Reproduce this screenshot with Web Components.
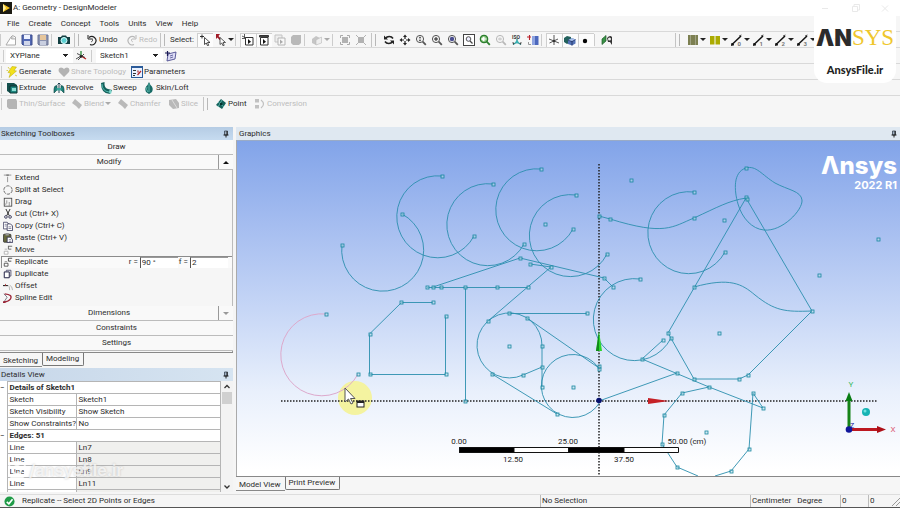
<!DOCTYPE html>
<html lang="en">
<head>
<meta charset="utf-8">
<title>A: Geometry - DesignModeler</title>
<style>
html,body{margin:0;height:100%}
body{font:8px/12px Roboto,"Noto Sans",sans-serif;color:#2c2c2c;background:#f5f5f5;overflow:hidden}
</style>
</head>
<body>
<app-window></app-window>
<script>
const define=(name,html,setup)=>customElements.define(name,class extends HTMLElement{
  constructor(){super();this.attachShadow({mode:'open'})}
  connectedCallback(){
    this.shadowRoot.innerHTML='<style>*{box-sizing:border-box}button,input,select{font:inherit;color:inherit;border:0;padding:0;margin:0;background:none;border-radius:0}</style>'+(typeof html==='function'?html(this):html);
    if(setup)setup(this);
  }
});

/* 12 x 12 icon drawings */
const lens=(c,inner)=>`<circle cx="5" cy="5" r="3.6" fill="#f4f4f4" stroke="${c}"/><path d="M7.7 7.7 10.8 10.8" stroke="${c}" stroke-width="1.800"/>${inner}`;
const edge=n=>`<path d="M1 10.500 10 2" stroke="#111" stroke-width="1.500"/><path d="M0 11.500 3 11 1 9ZM8 2 10.500 1" stroke="#111" fill="#111" stroke-width=".7"/>${n===''?'':`<text x="6.500" y="12" font-size="6" font-weight="700" fill="#777" font-family="Roboto">${n}</text>`}`;
const I={
app:`<rect width="12" height="12" fill="#1b1a12"/><path d="M3 2 10 6 3 10Z" fill="#f4c21c"/><path d="M3 2 6 6 3 10Z" fill="#fff0a0"/>`,
newf:`<path d="M1 11 6 3 7.500 1.500 10.500 3V11Z" fill="#fff" stroke="#aaa"/><path d="M7 2 6.500 5 10.500 5" fill="#ddd" stroke="#999" stroke-width=".7"/>`,
save:`<path d="M1 1H11V11H2L1 10Z" fill="#5369b4" stroke="#3e4f8d"/><rect x="3" y="1" width="6" height="4" fill="#eef2ff"/><rect x="3" y="7" width="6" height="4" fill="#d0d6ea"/>`,
saveas:`<path d="M1 1H11V11H2L1 10Z" fill="#8b93b0" stroke="#6a7496"/><rect x="3" y="1" width="6" height="5" fill="#e5c59b"/><rect x="3" y="7" width="6" height="4" fill="#c9cfe0"/>`,
camera:`<path d="M0 3H3L4 1.500H8L9 3H12V10H0Z" fill="#123f42"/><circle cx="6" cy="6.500" r="3" fill="#5ed1d2" stroke="#dff"/>`,
undo:`<path d="M3 3.500A4.200 4.200 0 1 1 4 10.500" fill="none" stroke="#222" stroke-width="1.200"/><path d="M2 1V5H6" fill="none" stroke="#222"/><path d="M6.500 4.500V7L5 8" fill="none" stroke="#444" stroke-width=".8"/>`,
redo:`<path d="M9 3.500A4.200 4.200 0 1 0 8 10.500" fill="none" stroke="#b8b8b8" stroke-width="1.200"/><path d="M10 1V5H6" fill="none" stroke="#b8b8b8"/><path d="M5.500 5V7L7 8" fill="none" stroke="#bbb" stroke-width=".8"/>`,
selnew:`<path d="M1 2.500H5M3 .5V4.500" stroke="#333"/><path d="M5.500 3.500V10.500L7.300 9 8.500 11.800 9.700 11.300 8.500 8.500H11Z" fill="#fff" stroke="#222" stroke-width=".8"/>`,
selmode:`<path d="M1 0H5L3.500 2 6 5 4.500 6 2.500 3.500 1 5Z" fill="#a11a26"/><path d="M5 3.500V10.500L6.800 9 8 11.800 9.200 11.300 8 8.500H10.500Z" fill="#fff" stroke="#333" stroke-width=".8"/>`,
fpoint:`<path d="M3.500 3.500H11V11H3.500Z" fill="#fff" stroke="#333"/><path d="M0 2 4 4M2.500 0V4M0 4.500H4" stroke="#333" stroke-width=".8"/><path d="M6 5V10L9 7.800Z" fill="#111"/>`,
fedge:`<path d="M1.500 1.500H10.500V3H1.500Z" fill="#555" stroke="#333"/><path d="M2.500 3.500H10V11H2.500Z" fill="#fff" stroke="#333"/><path d="M5 5V10L8 7.800Z" fill="#111"/>`,
fface:`<path d="M1 1H8V8H1Z" fill="#eee" stroke="#c4c4c4"/><path d="M4 4H11V11H4Z" fill="#f8f8f8" stroke="#b4b4b4"/><path d="M6 5.500V10L9 8Z" fill="#aaa"/>`,
fbody:`<path d="M1 3 3 1H11V9L9 11H3L1 9Z" fill="#b9b9b9"/>`,
extend:`<path d="M1 5 5 2 9 4V9L5 11 1 9Z" fill="#c5c5c5"/><path d="M5 6 10.500 3V9L5 11Z" fill="#eee" stroke="#bbb" stroke-width=".6"/>`,
box1:`<rect x="3" y="3" width="6" height="6" fill="#b2b2b2"/><path d="M1.500 4V1.500H4M8 1.500H10.500V4M10.500 8V10.500H8M4 10.500H1.500V8" fill="none" stroke="#aaa"/>`,
box2:`<rect x="3" y="3" width="6" height="6" fill="#b2b2b2"/><path d="M1 1 4 4M11 1 8 4M1 11 4 8M11 11 8 8" stroke="#b2b2b2"/>`,
rotate:`<path d="M10 4.500A4.200 3.500 0 0 0 2.500 4.500M2 7.500A4.200 3.500 0 0 0 9.500 7.500" fill="none" stroke="#222" stroke-width="1.500"/><path d="M1 1.500V5.500H5ZM11 10.500V6.500H7Z" fill="#222"/>`,
pan:`<path d="M6 .5 8 3H4ZM6 11.500 4 9H8ZM.5 6 3 4V8ZM11.500 6 9 8V4Z" fill="#222"/><path d="M6 3V5M6 7V9M3 6H5M7 6H9" stroke="#222" stroke-width="1.200"/>`,
zoom:lens('#555','<path d="M5 2.500 6.200 4.300H3.800ZM5 7.500 3.800 5.700H6.200Z" fill="#222"/>'),
zoomin:lens('#555','<path d="M3 5H7M5 3V7" stroke="#222"/>'),
zoomfit:lens('#555','<circle cx="5" cy="5" r="2.200" fill="#4b4f91"/>'),
zoombox:`<rect x=".5" y=".5" width="11" height="11" fill="#fff" stroke="#444"/><circle cx="5.500" cy="5" r="2.300" fill="#eef" stroke="#444" stroke-width=".9"/><path d="M7 7 9.500 9.500" stroke="#444" stroke-width="1.300"/>`,
prev:lens('#2c7f2e','<circle cx="5" cy="5" r="3.600" fill="#8dc783" stroke="#2c7f2e" stroke-width="1.400"/><path d="M2.500 5 5 3V7ZM4 5H7.500" fill="#fff" stroke="#fff"/>'),
next:lens('#b8b8b8','<path d="M3 5H7M5 3.500V6.500" stroke="#c4c4c4"/>'),
iso:`<text x="1" y="4.500" font-size="5" font-weight="700" font-family="Roboto" fill="#333">ISO</text><path d="M6 5V8M6 8 2 10.500M6 8 10 10.500" stroke="#278f91" stroke-width="1.300"/><circle cx="6" cy="8" r="1.500" fill="#37b4b5"/><path d="M1 8.500H3V11ZM11 8.500H9V11Z" fill="#444"/>`,
look:`<rect x="5" y="2" width="6.500" height="9" fill="#4c68bd"/><path d="M5 2H8V11H5Z" fill="#8fa4e0"/><path d="M0 3H4M2.500 1V6" stroke="#b9202a" stroke-width="1.100"/><path d="M1.500 8V10.500H4" fill="none" stroke="#999"/>`,
plane:`<path d="M6 1V11M1 5 11 9M1.500 9 10 5" stroke="#444" stroke-width=".9"/><circle cx="6" cy="7" r="1.200" fill="#333"/>`,
model:`<path d="M0 4 3 2 7 3V8L3 10 0 8Z" fill="#22605c"/><path d="M4 6 8 4 11.500 5.500V9.500L8 11.500 4 10Z" fill="#5372b6"/><path d="M4 6 8 7.500V11.500M8 7.500 11.500 5.500" stroke="#1e2d5c" fill="none" stroke-width=".8"/><path d="M8 4 11 5.500 8 7 4.500 6Z" fill="#a8c0ea"/>`,
dot:`<circle cx="5" cy="7" r="2.200" fill="#050505"/>`,
disp:`<path d="M1 5 5 1.500V7L1 10.500Z" fill="#389246" stroke="#1f5a2a" stroke-width=".7"/><path d="M6 4Q9 .5 11 3V11L9 8H7Z" fill="#333"/><circle cx="8.500" cy="5" r="1.500" fill="#eee"/>`,
cola:`<rect x="1" y="1" width="10" height="10" fill="#7c7f51"/><path d="M3.500 1V11M8.500 1V11" stroke="#a0a384"/>`,
colb:`<rect x="1" y="2" width="4.500" height="8.500" fill="#abab00"/><rect x="6.500" y="2" width="4.500" height="8.500" fill="#abab00"/>`,
e0:edge(0),e1:edge(1),e2:edge(2),e3:edge(3),e4:edge(''),
axes:`<path d="M6 6V1" stroke="#2a8a3a" stroke-width="1.300"/><path d="M6 6 11 9" stroke="#b22" stroke-width="1.300"/><path d="M6 6 1 9M2 3.500 10 7.500M9 4 3 10" stroke="#222" stroke-width=".8"/><circle cx="6" cy="6.500" r="1.300" fill="#222"/>`,
sketch:`<path d="M3 4 11 2 10 9 2 11Z" fill="#dcdcf5" stroke="#4d4d91" stroke-width=".9"/><path d="M0 3H5M2.500 1V6" stroke="#1a1a55" stroke-width="1.200"/><path d="M5 6 8 5M5 8 8 7" stroke="#4d4d91" stroke-width=".8"/>`,
gen:`<path d="M6 .5 10.500 1 8 4.500 10.500 5 3 11.500 4.500 7 2 6.500Z" fill="#f3e118" stroke="#b9a800" stroke-width=".5"/><path d="M2 1 3.500 3M.5 4.500H2M9 9 11 10" stroke="#cdbb10" stroke-width=".7"/>`,
share:`<path d="M6 11 1 6Q-.5 2 3 1.500 5 1.500 6 3 7 1.500 9 1.500 12.500 2 11 6Z" fill="#b3b3b3"/>`,
param:`<rect x=".5" y=".5" width="11" height="11" fill="#eaf2ff" stroke="#2b5b99"/><path d="M1 1.500H11" stroke="#2b5b99"/><path d="M2 4.500H5M2 7.500H5M2 9.500H4" stroke="#333"/><path d="M6.500 9 10 5M7 4.500V6.500" stroke="#b4262b" stroke-width="1.200"/>`,
extr:`<path d="M1 1H8L11 3V11H4L1 9Z" fill="#14504d"/><path d="M4 4H11V11H4Z" fill="#1e8780" stroke="#0a3230"/><path d="M6 6H10V9H6Z" fill="#8cdcd2"/>`,
rev:`<path d="M1 11V7Q1 3.500 4 3.500V8ZM11 11V7Q11 3.500 8 3.500V8Z" fill="#1d7f78" stroke="#0c4441" stroke-width=".6"/><path d="M6 1V11M4.500 2.500 6 1 7.500 2.500" stroke="#134" fill="none" stroke-width=".9"/><path d="M3.500 6H8.500V8.500H3.500Z" fill="#3aa79d"/>`,
sweep:`<path d="M1 1 4.500 0Q4 6 8 7L12 8 10 12Q1 12 1 1Z" fill="#14605b"/><path d="M2 2Q2 9 9 10" stroke="#52b9ae" fill="none"/><ellipse cx="10.300" cy="9.700" rx="1.300" ry="2" fill="#7fd6cc"/>`,
skin:`<path d="M6 0 7.500 3Q11 6 9 10L6 12 3 10Q1 6 4.500 3Z" fill="#176b66"/><path d="M6 2V10M4 5Q2.500 7 5 10" stroke="#69c9be" fill="none" stroke-width=".8"/>`,
thin:`<path d="M2 1H10L11 3V11H3L1 9V2Z" fill="#b5b5b5"/>`,
blend:`<path d="M1 5 4 1 11 7 8 11 5 8Z" fill="#b9b9b9"/>`,
slice:`<path d="M1 2 8 1 11 5V10L5 11 1 7Z" fill="#b9b9b9"/><path d="M4 2 9 10" stroke="#ddd"/>`,
point:`<path d="M6 1 11 5 7 11 1 7Z" fill="#15615b"/><path d="M3 4 9 9M7 2 3 9" stroke="#6cc9c0" stroke-width=".8"/><circle cx="6" cy="6" r="1.300" fill="#052f2c"/>`,
conv:`<path d="M1 1H5V4.500H1ZM1 7H5V10.500H1Z" fill="#c1c1c1"/><path d="M7 2Q12 6 7 10" stroke="#c1c1c1" fill="none" stroke-width="1.200"/>`,
mExtend:`<path d="M1 2.500H10M5.500 4.500V11" stroke="#888" fill="none"/><path d="M4 2.500H7" stroke="#444"/>`,
mSplit:`<circle cx="6" cy="6" r="5" fill="none" stroke="#555" stroke-dasharray="4 1.200"/>`,
mDrag:`<rect x="1.500" y="1.500" width="9" height="9.500" fill="#f5f5f5" stroke="#444"/><path d="M4.500 4V8M7.500 6V11M1 8.500H4" stroke="#888"/>`,
mCut:`<path d="M3.500 0 7.500 8M8.500 0 4.500 8" stroke="#222" stroke-width="1.100"/><circle cx="3.500" cy="9.500" r="1.600" fill="none" stroke="#224"/><circle cx="8.500" cy="9.500" r="1.600" fill="none" stroke="#224"/>`,
mCopy:`<path d="M.5 1.500H5L7 3.500V9.500H.5Z" fill="#fff" stroke="#446"/><path d="M5 3.500H9L11.500 6V11.500H5Z" fill="#fff" stroke="#335"/><path d="M2 4H4M2 6H4M6.500 7H10M6.500 9H10" stroke="#557" stroke-width=".8"/>`,
mPaste:`<rect x=".5" y="1.500" width="9" height="9.500" rx="1" fill="#66683c" stroke="#333"/><path d="M3 0H7V3H3Z" fill="#999"/><path d="M5 5H9L11.500 8V11.500H5Z" fill="#fff" stroke="#335"/><path d="M7 8H10M7 10H10" stroke="#557" stroke-width=".8"/>`,
mMove:`<path d="M6.500 1.500H11M6.500 1V5H10" fill="none" stroke="#555"/><path d="M1.500 7.500H6V11H1.500Z" fill="#fff" stroke="#aaa"/><path d="M2 5H5" stroke="#aaa"/>`,
mRepl:`<path d="M11 1.500H6.500V5H10" fill="none" stroke="#333"/><path d="M1.500 7.500H6V11H1.500Z" fill="#fff" stroke="#444"/><path d="M2 5.500H5" stroke="#888"/>`,
mDup:`<path d="M1.500 3.500H7.500V10.500H1.500Z" fill="#fff" stroke="#224" stroke-width="1.200"/><path d="M4 3V1.500H9.500V8.500H8" fill="none" stroke="#446"/>`,
mOff:`<path d="M0 5.500H6" stroke="#222" stroke-width="1.300"/><path d="M3 3.500V6" stroke="#a33"/><path d="M6 5Q8 6 8 11M8 5Q11 6 11.500 11" fill="none" stroke="#aaa"/>`,
mSpl:`<path d="M2 1Q12 2 9 7 7 10 1 11" fill="none" stroke="#9b2335" stroke-width="1.500"/><path d="M1 1 5 5 1 11" fill="none" stroke="#445" stroke-width=".8"/><path d="M0 10H3V12H0Z" fill="#9b2335"/>`,
ok:`<circle cx="6" cy="6" r="5.500" fill="#1f9b47"/><path d="M3 6.500 5.300 8.500 9.300 3.500" fill="none" stroke="#fff" stroke-width="1.800"/>`,
pin:`<path d="M4.500 3H7.500V7H4.500Z" fill="#9fb0c2" stroke="#3a4450" stroke-width=".8"/><path d="M7 3V7M3.500 7H8.500M6 7V9.500" stroke="#222"/>`
};

define('ui-icon',el=>`<style>:host{display:block;flex:none;width:var(--icon,12px);height:var(--icon,12px)}svg{display:block;width:100%;height:100%}</style><svg viewBox="0 0 12 12" fill="none" aria-hidden="true">${I[el.getAttribute('name')]}</svg>`);

define('tool-button',el=>`<style>
:host{display:block;flex:none;width:var(--w,auto)}
button{display:flex;align-items:center;width:100%;height:14px;padding:0 2px;gap:1px;white-space:nowrap}
:host([boxed]) button{background:#fcfcfc;box-shadow:inset 1px 1px #cfcfcf}
button:disabled{color:#bcbcbc}
i{border:solid transparent;border-width:3px 3px 0;border-top-color:#222;flex:none}
button:disabled i{border-top-color:#aaa}
</style><button ${el.hasAttribute('off')?'disabled':''} aria-label="${el.textContent||el.getAttribute('icon')}"><ui-icon name="${el.getAttribute('icon')}"></ui-icon><slot></slot>${el.hasAttribute('drop')?'<i></i>':''}</button>`);

define('tool-sep',`<style>:host{display:block;flex:none;width:5px;height:12px;border-left:1px solid #ccc}:host([grip]){width:10px;margin-left:2px;height:14px;border-left:1px solid #c4c4c4;display:flex}:host([grip])::before{content:"";margin-left:3px;width:1px;height:12px;align-self:center;background:#b8b8b8}</style>`);

define('tool-bar',`<style>:host{display:flex;align-items:center;height:16px;padding-left:5px;border-top:1px solid #d9d9d9;background:#f6f6f6;box-sizing:border-box}:host::before{content:"";width:1px;height:12px;background:#ccc;margin:0 2px 0 -4px;flex:none}</style><slot></slot>`);

define('title-bar',`<style>
:host{display:flex;align-items:center;height:16px;background:#fff;gap:1px;position:relative;z-index:2}
h1{font:inherit;margin:0;flex:1}
nav{display:flex;gap:18px;padding-right:9px}
button{width:12px;height:12px}
svg{display:block}
</style><ui-icon name="app"></ui-icon><h1>A: Geometry - DesignModeler</h1>
<nav><button aria-label="Minimize"><svg width="12" height="12" stroke="#e9e9e9"><path d="M3 6.500H9"/></svg></button><button aria-label="Restore"><svg width="12" height="12" stroke="#e9e9e9" fill="none"><path d="M3.500 4.500H8.500V9.500H3.500ZM5 4V2.500H10.500V8H9"/></svg></button><button aria-label="Close"><svg width="12" height="12" stroke="#e9e9e9"><path d="M3 3.500 9 9.500M9 3.500 3 9.500"/></svg></button></nav>`);

define('menu-bar',`<style>:host{display:flex;align-items:center;height:15px;padding-left:7px;gap:9px;background:#f6f6f6}button{height:12px}</style>${['File','Create','Concept','Tools','Units','View','Help'].map(t=>`<button>${t}</button>`).join('')}`);

define('drop-list',el=>`<style>
:host{display:flex;align-items:center;width:var(--w);height:14px;background:#fff;flex:none}
select{appearance:none;width:100%;height:14px;line-height:12px;padding-left:4px;background:linear-gradient(#222,#222) right 5px top 5px/5px 1px no-repeat,linear-gradient(#222,#222) right 6px top 6px/3px 1px no-repeat,linear-gradient(#222,#222) right 7px top 7px/1px 1px no-repeat}
</style><select aria-label="${el.getAttribute('label')}"><option>${el.textContent}</option></select>`);

define('panel-header',`<style>:host{display:flex;align-items:center;height:13px;padding:0 1px 0 1px;background:linear-gradient(90deg,#c7d7e9,#d6e4f1)}:host([active]){background:linear-gradient(#b5cce4,#c6dbf0)}:host([soft]){background:#dfe8f1;padding:0 0 0 3px}h2{font:inherit;flex:1;margin:0}</style><h2><slot></slot></h2><ui-icon name="pin"></ui-icon>`);

define('section-bar',el=>`<style>
:host{display:flex;height:15px;border-bottom:1px solid #bcbcbc;background:#f9f9f9;box-sizing:border-box}
.t{flex:1;text-align:center}
.s{width:15px;border-left:1px solid #999;display:grid;place-items:center}
i{border:solid transparent;border-width:0 3px 3px;border-bottom-color:#111}
:host([arrow=down]) i{border-width:3px 3px 0;border-top-color:#999}
</style><button class="t"><slot></slot></button>${el.hasAttribute('arrow')?`<button class="s" aria-label="Scroll ${el.getAttribute('arrow')}"><i></i></button>`:''}`);

define('sketch-tool',el=>`<style>
:host{display:flex;align-items:center;height:12px;padding:0 4px 0 3px;flex:none;box-sizing:border-box;--icon:10px}
:host([on]){background:#fafafa;box-shadow:inset 1px 1px #8b8b8b;margin-left:1px;padding-left:2px}
button{display:flex;gap:2px;height:12px;align-items:center;flex:1;text-align:left;white-space:nowrap}
</style><button><ui-icon name="${el.getAttribute('icon')}"></ui-icon><slot></slot></button><slot name="fields"></slot>`);

define('value-field',el=>`<style>:host{display:flex}label{display:flex;gap:2px;margin-left:1px}input{width:38px;height:11px;margin-top:1px;padding-left:1px;background:#fff;border-left:1px solid #555;border-top:1px solid #999}</style><label>${el.getAttribute('label')}<input value="${el.getAttribute('value')}"></label>`);

define('tab-strip',el=>{const t=el.getAttribute('tabs').split('|');return `<style>
:host{display:flex;align-items:flex-start;border-top:1px solid #888;height:16px;box-sizing:border-box;background:#f6f6f6}
button{height:14px;padding:0 4px 0 3px;white-space:nowrap}
.on{height:14px;border-bottom:1px solid #888;padding-top:2px}
.off{height:13px;border:1px solid #777;border-top:0;border-radius:0 0 2px 2px}
</style><button class="on">${t[0]}</button><button class="off">${t[1]}</button>`});

define('sketching-panel',`<style>
:host{display:flex;flex-direction:column;background:#f6f6f6}
.list{padding:2px 0 2px;border-right:1px solid #bbb}
.end{height:1px;border-right:1px solid #999}
</style>
<panel-header active>Sketching Toolboxes</panel-header>
<section-bar>Draw</section-bar>
<section-bar arrow="up">Modify</section-bar>
<div class="list">
${[['mExtend','Extend'],['mSplit','Split at Select'],['mDrag','Drag'],['mCut','Cut (Ctrl+ X)'],['mCopy','Copy (Ctrl+ C)'],['mPaste','Paste (Ctrl+ V)'],['mMove','Move']].map(a=>`<sketch-tool icon="${a[0]}">${a[1]}</sketch-tool>`).join('')}
<sketch-tool icon="mRepl" on>Replicate<value-field slot="fields" label="r =" value="90 °"></value-field><value-field slot="fields" label="f =" value="2"></value-field></sketch-tool>
<sketch-tool icon="mDup">Duplicate</sketch-tool><sketch-tool icon="mOff">Offset</sketch-tool><sketch-tool icon="mSpl">Spline Edit</sketch-tool>
</div>
<section-bar arrow="down">Dimensions</section-bar><section-bar>Constraints</section-bar><section-bar>Settings</section-bar>
<div class="end"></div>
<tab-strip tabs="Sketching|Modeling"></tab-strip>`);

define('details-view',`<style>
:host{display:flex;flex-direction:column;min-height:0;position:relative;background:#fff}
.body{display:flex;flex:1;min-height:0;overflow:hidden}
table{flex:1;border-collapse:collapse;table-layout:fixed;width:100%;height:0}
td,th{height:12px;padding:0 0 0 2px;border:1px solid #b5b5b5;line-height:11px;text-align:left;font-weight:400;white-space:nowrap;box-sizing:border-box}
th[colspan]{font-weight:700}
.g{width:7px;border-left:0;border-top:0;border-bottom:0;padding:0}
.ro{background:#f0f0ee}
.bar{width:12px;background:#f3f3f3;display:flex;flex-direction:column;align-items:center;flex:none}
.bar svg{flex:none}.bar b{width:10px;height:12px;background:#d0d0d0;margin-bottom:auto}
.mark{position:absolute;left:8px;bottom:12px;display:flex;gap:3px;align-items:center;color:#fffb;font:700 16px/20px Inter,sans-serif;text-shadow:0 0 2px #8887;pointer-events:none}
</style>
<panel-header>Details View</panel-header>
<div class="body"><table><colgroup><col style="width:7px"><col style="width:69px"><col></colgroup>
<tr><td class="g">−</td><th colspan="2">Details of Sketch1</th></tr>
<tr><td class="g"></td><th>Sketch</th><td>Sketch1</td></tr>
<tr><td class="g"></td><th>Sketch Visibility</th><td>Show Sketch</td></tr>
<tr><td class="g"></td><th>Show Constraints?</th><td>No</td></tr>
<tr><td class="g">−</td><th colspan="2">Edges: 51</th></tr>
${['Ln7','Ln8','Ln9','Ln11'].map(v=>`<tr><td class="g"></td><th>Line</th><td class="ro">${v}</td></tr>`).join('')}
<tr><td class="g"></td><th></th><td class="ro"></td></tr>
</table>
<div class="bar"><svg width="12" height="11"><path d="M3.500 7 6 4.500 8.500 7" fill="none" stroke="#333" stroke-width="1.300"/></svg><b></b><svg width="12" height="11"><path d="M3.500 4.500 6 7 8.500 4.500" fill="none" stroke="#333" stroke-width="1.300"/></svg></div></div>
<div class="mark"><svg width="18" height="18" fill="none" stroke="#fffc" stroke-width="2"><rect x="1" y="1" width="16" height="16" rx="5"/><circle cx="9" cy="9" r="4"/></svg><span>/ansysfile.ir</span></div>`);

/* Sketch geometry, in window coordinates */
const arcs=[[342,245,402,214],[442,176,474,236],[493,184,524,244],[541,169,573,229],[576,195,607,254],[640,279,671,338],[694,192,725,252]];
const paths=['M427 287.500H528','M465.500 287V401','M433 287 520 258 604 278 613 287','M530 264 551 267 488 321','M433 302.500H401.500L369.500 334V374.500H445.500V316','M523 375A32.500 32.500 0 1 1 542 346V387M542 367 523 375','M509 313.500H587','M527 318 599 368','M492 374 557 414','M598 367A31.500 31.500 0 1 0 600 402','M599 401 677 373','M642 359 663 340','M642 359 709 387 763 408 753 393 749 449 731 471 715 476','M709 387 682 393 664 415 662 444 677 467 698 476','M668 333 746 198 812 311 748 375 739 379H694Z','M599 216 610 219C665 236 672 227 694 218 718 207 728 201 746 198','M746 168C733 172 734 190 738 204 742 218 752 229 764 230 782 232 803 210 802 200 801 191 788 190 775 183 762 175 756 165 746 168','M694 287C730 277 742 284 755 295 775 311 785 312 812 311'];
const pts='545,224 631,180 724,220 878,239 819,275 719,333 509,346 573,387 706,432 427,287 433,287 441,287 465,287 497,287 528,287 465,401 520,258 604,278 613,287 530,264 551,267 401,302 433,302 370,334 370,374 446,374 446,316 488,321 509,313 527,318 542,346 542,367 523,375 492,374 587,313 599,366 599,369 542,387 557,414 677,373 642,359 663,340 668,333 709,387 763,408 753,393 749,449 731,471 682,393 664,415 662,444 677,467 694,287 746,197 747,199 812,311 748,375 739,379 694,379 599,216 610,219 694,218 746,168 326,314 358,374'.split(' ').map(p=>p.split(',').map(Number)).concat(arcs.flatMap(a=>[[a[0],a[1]],[a[2],a[3]]]));
const arc=a=>`M${a[0]} ${a[1]}A41 41 0 1 0 ${a[2]} ${a[3]}`;

define('graphics-view',`<style>
:host{display:flex;flex-direction:column;min-width:0;min-height:0}
.view{flex:1;min-height:0;display:block;width:100%;background:linear-gradient(#82a4e9,#a5bdf0 25%,#c6d6f6 50%,#e9f0fc 75%,#fff 98%);border-left:1px solid #aaa;border-top:1px solid #9aabc6}
text{font:8px Roboto,sans-serif;fill:#222}
</style>
<panel-header soft>Graphics</panel-header>
<svg class="view" viewBox="237 141 663 335" preserveAspectRatio="xMidYMid slice" role="img" aria-label="Sketch1 on XYPlane">
<circle cx="355" cy="398" r="17" fill="#f4f3a0"/>
<path d="M281 401H878M599 164V476" stroke="#222" stroke-width="1.500" stroke-dasharray="1.500 1.500"/>
<path d="${arc([326,314,358,374])}" fill="none" stroke="#dda9cc"/>
<g fill="none" stroke="#2b8fae" stroke-width=".9">${arcs.map(a=>`<path d="${arc(a)}"/>`).join('')}${paths.map(d=>`<path d="${d}"/>`).join('')}</g>
<g fill="#b9dcec" fill-opacity=".5" stroke="#16879f" stroke-width=".8">${pts.map(p=>`<rect x="${p[0]-1}" y="${p[1]-1}" width="3" height="3"/>`).join('')}</g>
<path d="M599 331 602 351H596Z" fill="#2cd52c"/><path d="M599 331V351H596Z" fill="#118b1b"/>
<path d="M648 398 669 401 648 404Z" fill="#c52127"/>
<circle cx="599" cy="400.500" r="2.800" fill="#07126f"/>
<path d="M345 388V402L348.500 399 351 404 353 403 350.500 398.500H355Z" fill="#fff" stroke="#555"/>
<rect x="357" y="401" width="7" height="6" fill="#fff" stroke="#222"/><path d="M357 402H364" stroke="#222" stroke-width="2"/>
<g stroke="#111" stroke-width="1"><path d="M459.500 447.500H678.500V452.500H459.500Z" fill="#fff"/><path d="M459.500 447.500H514V452.500H459.500ZM568.500 447.500H624V452.500H568.500Z" fill="#000"/></g>
<g text-anchor="middle"><text x="459" y="444">0.00</text><text x="568" y="444">25.00</text><text x="687" y="444">50.00 (cm)</text><text x="513" y="462">12.50</text><text x="624" y="462">37.50</text></g>
<path d="M849 429V400" stroke="#158317" stroke-width="3"/><path d="M849 392 852.500 401H845.500Z" fill="#087c12"/>
<path d="M849 429.500H877" stroke="#bd1820" stroke-width="3"/><path d="M886 429.500 877 433V426Z" fill="#ad1018"/>
<circle cx="849" cy="429.500" r="3.300" fill="#10169b"/><circle cx="866" cy="412" r="4" fill="#16b3b3"/><circle cx="865" cy="411" r="1.500" fill="#6ee3df"/>
<text x="851" y="387" text-anchor="middle" style="fill:#3dbb62">Y</text><text x="893" y="432" text-anchor="middle" style="fill:#dc5c78">X</text><text x="850" y="428" style="fill:#10169b;font-size:7px">Z</text>
<g text-anchor="end"><text x="897" y="174" style="font:800 24px Inter,sans-serif;fill:#fff">Λnsys</text><text x="897" y="189" style="font:700 11px Inter,sans-serif;fill:#fff">2022 R1</text></g>
</svg>
<tab-strip tabs="Model View|Print Preview"></tab-strip>`);

define('status-bar',`<style>
:host{display:grid;grid-template-columns:60% 1fr 90px 28px 32px;align-items:center;height:14px;background:#f5f5f5;border-top:1px solid #ddd;border-bottom:1px solid #555;box-sizing:border-box}
span{border-left:1px solid #bbb;padding-left:1px;height:12px;line-height:12px;white-space:pre}
.m{display:flex;gap:7px;align-items:center;border:0;padding-left:4px}
.z{display:flex;justify-content:space-between}
</style><span class="m"><ui-icon name="ok" style="--icon:11px"></ui-icon>Replicate -- Select 2D Points or Edges</span><span>No Selection</span><span>Centimeter   Degree</span><span>0</span><span class="z">0<svg width="8" height="12" stroke="#999"><path d="M0 11 8 3M4 11 8 7"/></svg></span>`);

define('brand-card',`<style>
:host{position:absolute;right:4px;top:2px;width:82px;height:81px;border-radius:13px;background:#fffffff5;display:flex;flex-direction:column;align-items:center}
.l{display:flex;margin-top:22px;font:900 23px/28px Inter,sans-serif;color:#2b2b2b;white-space:nowrap}
.l span{font:23px/28px "Liberation Serif",serif;color:#efc72d}
.u{font:900 11px/12px Lato,sans-serif;margin-top:12px;color:#222}
</style><div class="l">ΛN<span>SYS</span></div><div class="u">AnsysFile.ir</div>`);

const b=(icon,w,attr='',text='')=>`<tool-button icon="${icon}" style="--w:${w}px" ${attr}>${text}</tool-button>`;
define('app-window',`<style>
:host{display:grid;grid-template-rows:auto auto auto auto auto auto auto minmax(0,1fr) auto;height:100vh;position:relative}
.top{padding-left:4px}
.planes{padding-left:7px}
.last{height:32px;padding-bottom:16px}
main{display:grid;grid-template-columns:233px minmax(0,1fr);column-gap:3px;min-height:0;padding-bottom:2px}
aside{display:grid;grid-template-rows:auto minmax(0,1fr);min-height:0}
.sp{width:58px;flex:none}
.lab{width:27px;flex:none}
</style>
<title-bar></title-bar><menu-bar></menu-bar>
<tool-bar class="top">
${b('newf',16)}${b('save',16)}${b('saveas',16)}<tool-sep></tool-sep>${b('camera',16)}<tool-sep grip></tool-sep>${b('undo',40,'','Undo')}${b('redo',34,'off','Redo')}<tool-sep grip></tool-sep><span class="lab">Select:</span>${b('selnew',16,'boxed')}${b('selmode',22,'drop')}<tool-sep></tool-sep>${b('fpoint',16,'boxed')}${b('fedge',16,'boxed')}${b('fface',16,'off')}${b('fbody',16,'off')}<tool-sep></tool-sep>${b('extend',23,'off drop')}<tool-sep></tool-sep>${b('box1',16,'off')}${b('box2',16,'off')}<tool-sep grip></tool-sep>${['rotate','pan','zoom','zoomin','zoomfit','zoombox','prev'].map(i=>b(i,16)).join('')}${b('next',16,'off')}${b('iso',16)}${b('look',16)}<tool-sep></tool-sep>${b('plane',16,'boxed')}${b('model',16,'boxed')}${b('dot',16,'boxed')}<tool-sep></tool-sep>${b('disp',16)}<div class="sp"></div><tool-sep grip></tool-sep>${['cola','colb','e0','e1','e2','e3','e4'].map(i=>b(i,22,'drop')).join('')}
</tool-bar>
<tool-bar class="planes"><drop-list label="Plane" style="--w:67px">XYPlane</drop-list>${b('axes',18)}<tool-sep></tool-sep><drop-list label="Sketch" style="--w:67px">Sketch1</drop-list>${b('sketch',18)}</tool-bar>
<tool-bar>${b('gen',52,'','Generate')}${b('share',73,'off','Share Topology')}${b('param',60,'','Parameters')}</tool-bar>
<tool-bar>${b('extr',47,'','Extrude')}${b('rev',47,'','Revolve')}${b('sweep',43,'','Sweep')}${b('skin',50,'','Skin/Loft')}</tool-bar>
<tool-bar class="last">${b('thin',65,'off','Thin/Surface')}${b('blend',46,'off drop','Blend')}${b('blend',51,'off','Chamfer')}${b('slice',35,'off','Slice')}<tool-sep grip></tool-sep>${b('point',39,'','Point')}${b('conv',60,'off','Conversion')}</tool-bar>
<main><aside><sketching-panel></sketching-panel><details-view></details-view></aside><graphics-view></graphics-view></main>
<status-bar></status-bar>
<brand-card></brand-card>`);
</script>
</body>
</html>
